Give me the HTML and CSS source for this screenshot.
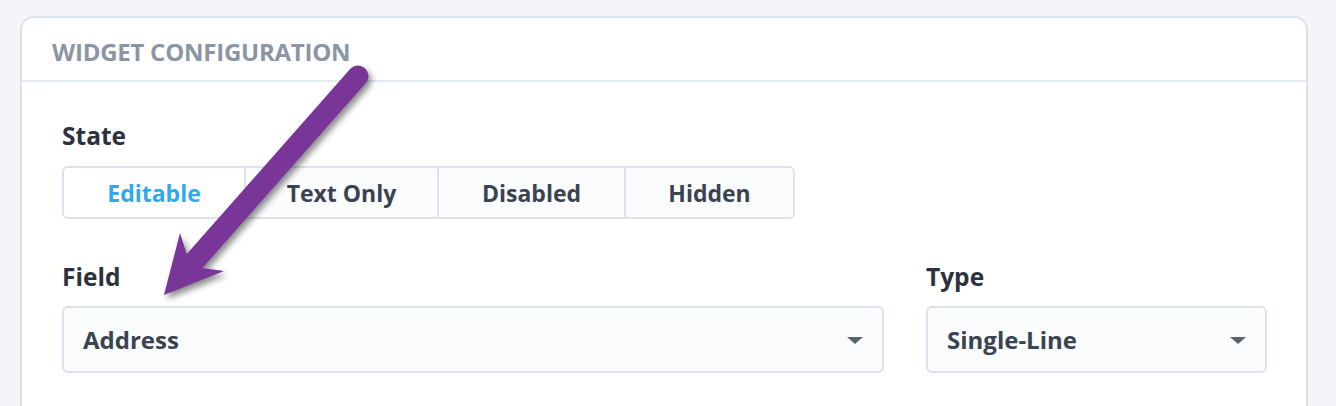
FILE: index.html
```html
<!DOCTYPE html>
<html lang="en">
<head>
<meta charset="utf-8">
<title>Widget Configuration</title>
<link rel="stylesheet" href="styles.css">
</head>
<body>
<div class="card">
  <div class="card-header">
    <h2 class="card-title">Widget Configuration</h2>
  </div>
  <div class="card-body">
    <div class="group">
      <div class="label">State</div>
      <div class="segmented">
        <button class="seg active">Editable</button>
        <button class="seg">Text Only</button>
        <button class="seg">Disabled</button>
        <button class="seg">Hidden</button>
      </div>
    </div>
    <div class="row">
      <div class="group">
        <div class="label">Field</div>
        <div class="select"><span>Address</span><span class="caret"></span></div>
      </div>
      <div class="group">
        <div class="label">Type</div>
        <div class="select"><span>Single-Line</span><span class="caret"></span></div>
      </div>
    </div>
  </div>
</div>
<svg class="arrow" width="1336" height="406" viewBox="0 0 1336 406" aria-hidden="true">
  <g class="arrow-shape">
    <line x1="358" y1="76" x2="192" y2="264" stroke="#7a3599" stroke-width="21" stroke-linecap="round"/>
    <polygon points="164,295 180,233 187,255 202,268 224,271" fill="#7a3599"/>
  </g>
</svg>
</body>
</html>
```
FILE: styles.css
```css
* { box-sizing: border-box; }
html, body { margin: 0; padding: 0; }
body {
  background: #f3f5f8;
  font-family: "Open Sans", "Noto Sans", sans-serif;
  width: 1336px;
  height: 406px;
  overflow: hidden;
  position: relative;
}
.card {
  margin: 16px 28px 0 20px;
  background: #ffffff;
  border: 2px solid #dde3ea;
  border-bottom: 0;
  border-radius: 14px 14px 0 0;
  height: 390px;
}
.card-header {
  height: 64px;
  padding: 4px 0 0 30px;
  display: flex;
  align-items: center;
  border-bottom: 2px solid #e5eaf0;
}
.card-title {
  margin: 0;
  font-size: 24px;
  font-weight: 700;
  text-transform: uppercase;
  color: #8b96a2;
  letter-spacing: -0.25px;
}
.card-body {
  padding: 38px 39px 0 40px;
}
.label {
  font-size: 24.5px;
  font-weight: 700;
  line-height: 32px;
  color: #2b323d;
  margin-bottom: 14px;
}
.segmented {
  display: inline-flex;
  height: 53px;
  border: 2px solid #dde3ea;
  border-radius: 6px;
  background: #fbfcfd;
  overflow: hidden;
}
.seg {
  font-family: inherit;
  font-size: 23px;
  font-weight: 700;
  color: #3a4350;
  background: #fbfcfd;
  border: 0;
  border-left: 2px solid #dde3ea;
  padding: 0;
  margin: 0;
  display: flex;
  align-items: center;
  justify-content: center;
}
.seg:nth-child(1) { width: 180px; border-left: 0; }
.seg:nth-child(2) { width: 193px; }
.seg:nth-child(3) { width: 187px; }
.seg:nth-child(4) { width: 169px; }
.seg.active { color: #30a9ea; background: #ffffff; }
.row {
  display: grid;
  grid-template-columns: minmax(0, 822fr) minmax(0, 341fr);
  column-gap: 42px;
  margin-top: 42px;
}
.row .label { margin-bottom: 13px; }
.select {
  height: 67px;
  border: 2px solid #dde3ea;
  border-radius: 6px;
  background: #fbfcfd;
  display: flex;
  align-items: center;
  justify-content: space-between;
  padding: 0 19px 0 19px;
  font-size: 24px;
  font-weight: 700;
  color: #3a4350;
}
.caret {
  width: 0;
  height: 0;
  border-left: 8px solid transparent;
  border-right: 8px solid transparent;
  border-top: 7px solid #5c6270;
  margin-top: 2px;
}
.arrow {
  position: absolute;
  left: 0;
  top: 0;
  pointer-events: none;
}
.arrow-shape {
  filter: drop-shadow(3px 4px 3px rgba(0, 0, 0, 0.45));
}
```
